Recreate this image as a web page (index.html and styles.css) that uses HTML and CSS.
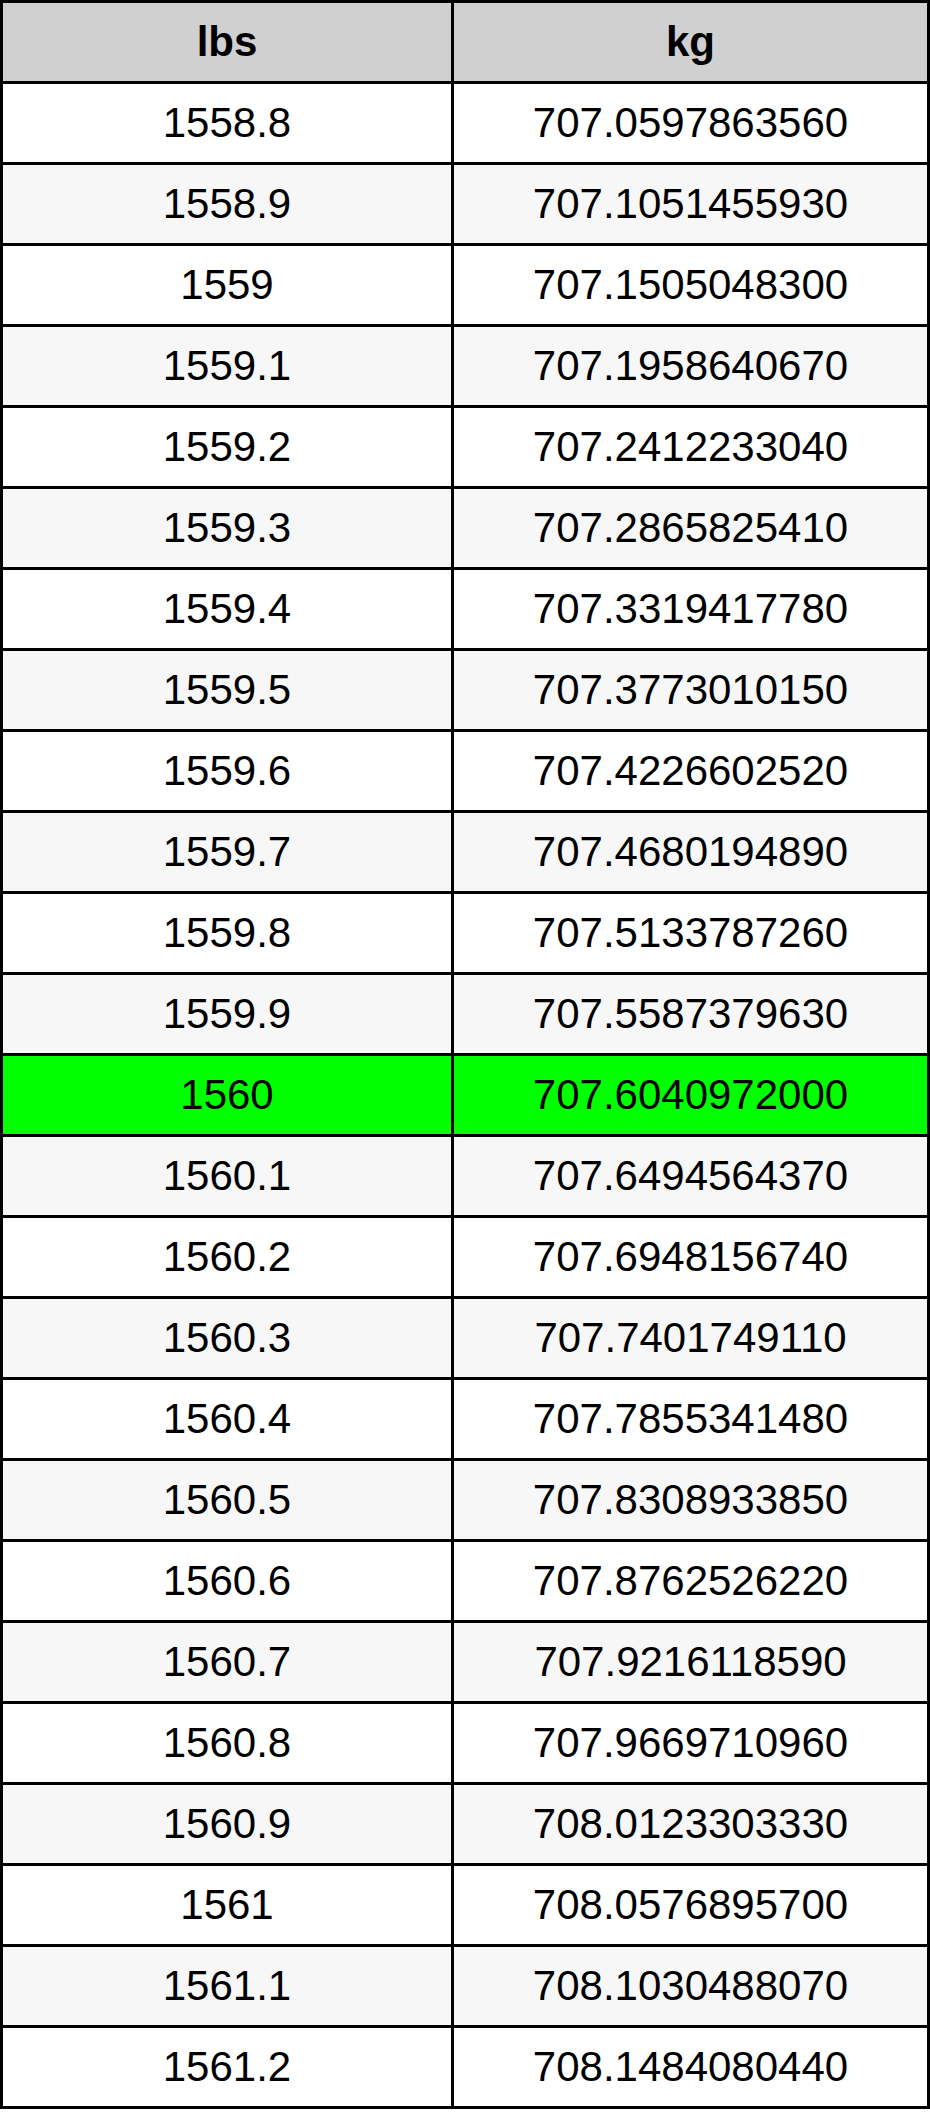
FILE: index.html
```html
<!DOCTYPE html>
<html>
<head>
<meta charset="utf-8">
<link rel="stylesheet" href="styles.css">
</head>
<body>
<table class="conv">
<thead>
<tr><th class="c1">lbs</th><th class="c2">kg</th></tr>
</thead>
<tbody>
<tr><td class="c1">1558.8</td><td class="c2">707.0597863560</td></tr>
<tr class="alt"><td class="c1">1558.9</td><td class="c2">707.1051455930</td></tr>
<tr><td class="c1">1559</td><td class="c2">707.1505048300</td></tr>
<tr class="alt"><td class="c1">1559.1</td><td class="c2">707.1958640670</td></tr>
<tr><td class="c1">1559.2</td><td class="c2">707.2412233040</td></tr>
<tr class="alt"><td class="c1">1559.3</td><td class="c2">707.2865825410</td></tr>
<tr><td class="c1">1559.4</td><td class="c2">707.3319417780</td></tr>
<tr class="alt"><td class="c1">1559.5</td><td class="c2">707.3773010150</td></tr>
<tr><td class="c1">1559.6</td><td class="c2">707.4226602520</td></tr>
<tr class="alt"><td class="c1">1559.7</td><td class="c2">707.4680194890</td></tr>
<tr><td class="c1">1559.8</td><td class="c2">707.5133787260</td></tr>
<tr class="alt"><td class="c1">1559.9</td><td class="c2">707.5587379630</td></tr>
<tr class="hl"><td class="c1">1560</td><td class="c2">707.6040972000</td></tr>
<tr class="alt"><td class="c1">1560.1</td><td class="c2">707.6494564370</td></tr>
<tr><td class="c1">1560.2</td><td class="c2">707.6948156740</td></tr>
<tr class="alt"><td class="c1">1560.3</td><td class="c2">707.7401749110</td></tr>
<tr><td class="c1">1560.4</td><td class="c2">707.7855341480</td></tr>
<tr class="alt"><td class="c1">1560.5</td><td class="c2">707.8308933850</td></tr>
<tr><td class="c1">1560.6</td><td class="c2">707.8762526220</td></tr>
<tr class="alt"><td class="c1">1560.7</td><td class="c2">707.9216118590</td></tr>
<tr><td class="c1">1560.8</td><td class="c2">707.9669710960</td></tr>
<tr class="alt"><td class="c1">1560.9</td><td class="c2">708.0123303330</td></tr>
<tr><td class="c1">1561</td><td class="c2">708.0576895700</td></tr>
<tr class="alt"><td class="c1">1561.1</td><td class="c2">708.1030488070</td></tr>
<tr><td class="c1">1561.2</td><td class="c2">708.1484080440</td></tr>
</tbody>
</table>
</body>
</html>
```

FILE: styles.css
```css
html, body {
  margin: 0;
  padding: 0;
  background: #ffffff;
}

.conv {
  border-collapse: separate;
  border-spacing: 0;
  table-layout: fixed;
  width: 930px;
  border-left: 3px solid #000;
  border-top: 3px solid #000;
  font-family: "Liberation Sans", Arial, sans-serif;
  font-size: 42px;
  color: #000;
}

.conv th,
.conv td {
  padding: 0;
  height: 78px;
  line-height: 78px;
  text-align: center;
  border-right: 3px solid #000;
  border-bottom: 3px solid #000;
  white-space: nowrap;
  overflow: hidden;
}

.conv th {
  background: #d0d0d0;
  font-weight: bold;
}

.conv td {
  background: #ffffff;
  font-weight: normal;
}

.conv .c1 {
  width: 448px;
}

.conv .c2 {
  width: 473px;
}

.conv tr.alt td {
  background: #f7f7f7;
}

.conv tr.hl td {
  background: #00ff00;
}
```
